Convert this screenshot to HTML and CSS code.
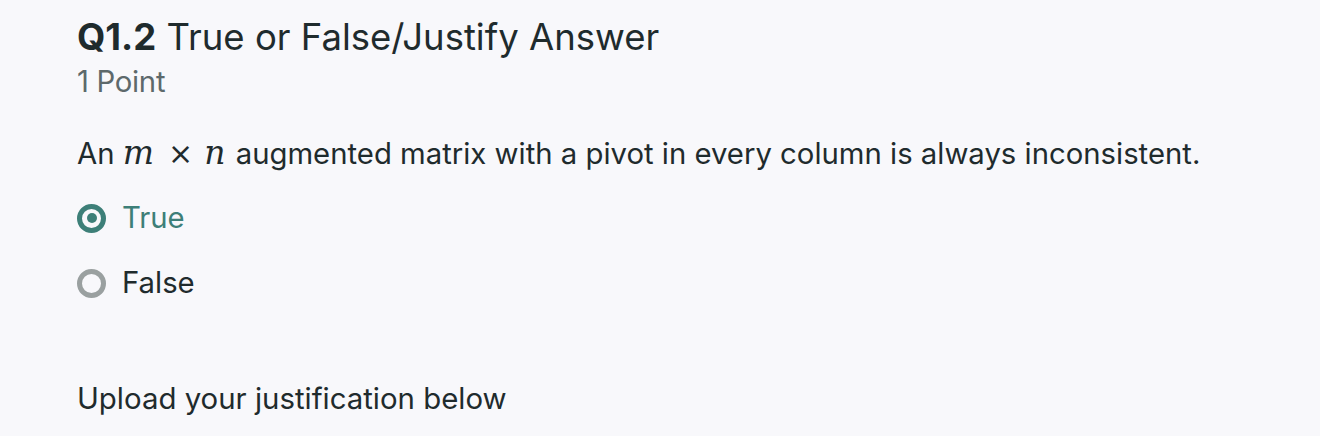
FILE: index.html
```html
<!DOCTYPE html>
<html>
<head>
<meta charset="utf-8">
<link rel="stylesheet" href="styles.css">
</head>
<body>
<div class="question">
  <div class="q-head">
    <h2 class="q-title"><span class="q-num">Q1.2</span> True or False/Justify Answer</h2>
    <div class="q-points">1 Point</div>
  </div>
  <p class="q-prompt">An <span class="math"><i class="mi">m</i><span class="times">×</span><i class="mi">n</i></span> augmented matrix with a pivot in every column is always inconsistent.</p>
  <div class="options">
    <label class="option selected"><span class="radio"></span><span class="opt-text">True</span></label>
    <label class="option"><span class="radio"></span><span class="opt-text">False</span></label>
  </div>
  <p class="upload">Upload your justification below</p>
</div>
</body>
</html>
```
FILE: styles.css
```css
html, body {
  margin: 0;
  padding: 0;
  background: #f8f8fb;
}
body {
  font-family: Inter, "Open Sans", sans-serif;
  color: #1f2b2d;
  width: 1320px;
  height: 436px;
  overflow: hidden;
}
.question {
  padding: 15px 0 0 77px;
}
.q-title {
  margin: 0;
  font-size: 36.5px;
  font-weight: 400;
  line-height: 44px;
}
.q-num {
  font-weight: 700;
}
.q-points {
  font-size: 29.3px;
  color: #5d696b;
  line-height: 36px;
  margin-top: 5px;
  letter-spacing: -0.3px;
}
.q-prompt {
  margin: 35px 0 0;
  font-size: 29.3px;
  line-height: 36px;
}
.mi {
  font-family: "DejaVu Serif", serif;
  font-size: 33px;
}
.times {
  font-family: "DejaVu Sans", sans-serif;
  font-size: 30px;
  margin: 0 11px 0 14px;
}
.math {
  margin-right: 2px;
}
.options {
  display: flex;
  flex-direction: column;
  gap: 29px;
  margin-top: 28px;
}
.option {
  display: flex;
  align-items: center;
  gap: 16px;
  font-size: 29.3px;
  line-height: 36px;
}
.radio {
  width: 29px;
  height: 29px;
  border: 5px solid #9aa0a0;
  border-radius: 50%;
  box-sizing: border-box;
  position: relative;
}
.option.selected .radio {
  border-color: #3d7f78;
}
.option.selected .radio::after {
  content: "";
  position: absolute;
  left: 4.5px;
  top: 4.5px;
  width: 10px;
  height: 10px;
  border-radius: 50%;
  background: #3d7f78;
}
.option.selected .opt-text {
  color: #3d7f78;
}
.upload {
  margin: 80px 0 0;
  font-size: 29.4px;
  line-height: 36px;
}
```
